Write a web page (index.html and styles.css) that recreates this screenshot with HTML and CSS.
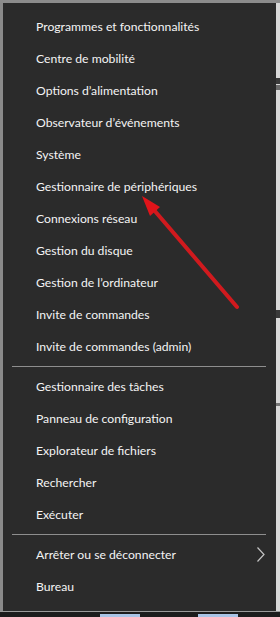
FILE: index.html
```html
<!DOCTYPE html>
<html lang="fr">
<head>
<meta charset="utf-8">
<title>Menu Win+X</title>
<link rel="stylesheet" href="styles.css">
</head>
<body>
<div class="screen">
  <div class="top-edge"></div>
  <div class="middle">
    <div class="left-edge"></div>
    <nav class="menu">
      <div class="item">Programmes et fonctionnalités</div>
      <div class="item">Centre de mobilité</div>
      <div class="item">Options d’alimentation</div>
      <div class="item">Observateur d’événements</div>
      <div class="item">Système</div>
      <div class="item">Gestionnaire de périphériques</div>
      <div class="item">Connexions réseau</div>
      <div class="item">Gestion du disque</div>
      <div class="item">Gestion de l’ordinateur</div>
      <div class="item">Invite de commandes</div>
      <div class="item">Invite de commandes (admin)</div>
      <div class="sep"></div>
      <div class="item">Gestionnaire des tâches</div>
      <div class="item">Panneau de configuration</div>
      <div class="item">Explorateur de fichiers</div>
      <div class="item">Rechercher</div>
      <div class="item">Exécuter</div>
      <div class="sep"></div>
      <div class="item has-sub">Arrêter ou se déconnecter
        <svg class="chev" width="8" height="15" viewBox="0 0 8 15"><polyline points="0.5,0.5 7,7.5 0.5,14.5" fill="none" stroke="#c4c4c4" stroke-width="1.2"/></svg>
      </div>
      <div class="item">Bureau</div>
    </nav>
    <div class="right-edge">
      <span class="mark m1"></span>
      <span class="mark m2"></span>
      <span class="mark m3"></span>
      <span class="mark m4"></span>
    </div>
  </div>
  <div class="taskbar">
    <span class="tb-gap1"></span>
    <span class="tb-btn"></span>
    <span class="tb-gap2"></span>
    <span class="tb-btn"></span>
  </div>
  <svg class="arrow" width="280" height="617" viewBox="0 0 280 617">
    <line x1="237" y1="307" x2="154" y2="210" stroke="#d01a1e" stroke-width="4" stroke-linecap="round"/>
    <polygon points="142,196 150,216 160,207" fill="#e0141a"/>
  </svg>
</div>
</body>
</html>
```
FILE: styles.css
```css
html, body {
  margin: 0;
  padding: 0;
}
body {
  width: 280px;
  height: 617px;
  overflow: hidden;
  background: #8a8a8a;
  font-family: Lato, "Open Sans", "DejaVu Sans", sans-serif;
}
.screen {
  position: relative;
  width: 280px;
  height: 617px;
  display: flex;
  flex-direction: column;
}
.top-edge {
  height: 3px;
  background: #8c8c8c;
}
.middle {
  display: flex;
  height: 608px;
}
.left-edge {
  width: 3px;
  background: #8a8a8a;
}
.menu {
  width: 273px;
  background: #2b2b2b;
  box-sizing: border-box;
  padding: 7px 0 9px;
  display: flex;
  flex-direction: column;
}
.item {
  height: 32px;
  display: flex;
  align-items: center;
  padding-left: 33px;
  padding-right: 11px;
  color: #f4f4f4;
  font-size: 12.2px;
  white-space: nowrap;
}
.has-sub {
  justify-content: space-between;
}
.chev {
  display: block;
}
.sep {
  height: 8px;
  display: flex;
  align-items: center;
  padding: 0 10px 0 9px;
}
.sep::before {
  content: "";
  flex: 1;
  height: 1px;
  background: #8e8e8e;
}
.right-edge {
  width: 4px;
  background: #d9d9d9;
  display: flex;
  flex-direction: column;
}
.mark {
  display: block;
  width: 4px;
  background: #3a3a3a;
}
.m1 { height: 6px; margin-top: 75px; }
.m2 { height: 5px; margin-top: 1px; background: #6a6a6a; }
.m3 { height: 8px; margin-top: 220px; }
.m4 { height: 3px; margin-top: 85px; background: #777; }
.taskbar {
  height: 6px;
  background: #1c1c1c;
  display: flex;
  align-items: flex-end;
  border-top: 1px solid #9a9a9a;
  box-sizing: border-box;
}
.tb-gap1 { width: 100px; }
.tb-gap2 { width: 58px; }
.tb-btn {
  width: 40px;
  height: 3px;
  background: #a9c4e6;
}
.arrow {
  position: absolute;
  left: 0;
  top: 0;
  pointer-events: none;
}
```
